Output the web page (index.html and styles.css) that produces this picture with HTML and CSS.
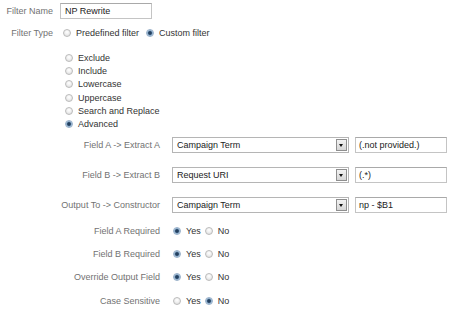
FILE: index.html
```html
<!DOCTYPE html>
<html lang="en">
<head>
  <meta charset="UTF-8" />
  <title>Edit Filter</title>
  <link rel="stylesheet" href="styles.css">
</head>
<body>
  <div class="form">
    <div class="row name-row">
      <span class="label">Filter Name</span>
      <span class="textbox name">NP Rewrite</span>
    </div>
    <div class="row type-row">
      <span class="label">Filter Type</span>
      <span class="choice"><i class="radio"></i>Predefined filter</span>
      <span class="choice"><i class="radio on"></i>Custom filter</span>
    </div>

    <ul class="options">
      <li><i class="radio"></i>Exclude</li>
      <li><i class="radio"></i>Include</li>
      <li><i class="radio"></i>Lowercase</li>
      <li><i class="radio"></i>Uppercase</li>
      <li><i class="radio"></i>Search and Replace</li>
      <li><i class="radio on"></i>Advanced</li>
    </ul>

    <div class="fields">
      <div class="field">
        <span class="label wide">Field A -&gt; Extract A</span>
        <span class="select">Campaign Term<b class="arrow"></b></span>
        <span class="textbox small">(.not provided.)</span>
      </div>
      <div class="field">
        <span class="label wide">Field B -&gt; Extract B</span>
        <span class="select">Request URI<b class="arrow"></b></span>
        <span class="textbox small">(.*)</span>
      </div>
      <div class="field">
        <span class="label wide">Output To -&gt; Constructor</span>
        <span class="select">Campaign Term<b class="arrow"></b></span>
        <span class="textbox small">np - $B1</span>
      </div>
    </div>

    <div class="switches">
      <div class="switch">
        <span class="label wide">Field A Required</span>
        <span class="choice"><i class="radio on"></i>Yes</span>
        <span class="choice"><i class="radio"></i>No</span>
      </div>
      <div class="switch">
        <span class="label wide">Field B Required</span>
        <span class="choice"><i class="radio on"></i>Yes</span>
        <span class="choice"><i class="radio"></i>No</span>
      </div>
      <div class="switch">
        <span class="label wide">Override Output Field</span>
        <span class="choice"><i class="radio on"></i>Yes</span>
        <span class="choice"><i class="radio"></i>No</span>
      </div>
      <div class="switch">
        <span class="label wide">Case Sensitive</span>
        <span class="choice"><i class="radio"></i>Yes</span>
        <span class="choice"><i class="radio on"></i>No</span>
      </div>
    </div>
  </div>
</body>
</html>
```

FILE: styles.css
```css
body {
  margin: 0;
  padding: 0;
  background: #fff;
  font-family: "Liberation Sans", Arial, sans-serif;
  font-size: 9px;
  color: #333;
}
.form {
  padding-top: 3px;
}
.row {
  display: flex;
  align-items: center;
  height: 16px;
}
.label {
  width: 53px;
  text-align: right;
  color: #727272;
  flex: none;
}
.label.wide {
  width: 160px;
}
.name-row .label {
  margin-right: 7px;
}
.type-row {
  margin-top: 6px;
}
.type-row .label {
  margin-right: 10px;
}
.type-row .choice {
  margin-right: 7px;
}
.choice {
  display: flex;
  align-items: center;
  color: #333;
}
.radio {
  display: inline-block;
  box-sizing: border-box;
  width: 8px;
  height: 8px;
  border-radius: 50%;
  border: 1px solid #bcbcbc;
  background: radial-gradient(circle at 50% 35%, #fff 0, #f2f2f2 40%, #d8d8d8 100%);
  margin-right: 5px;
  flex: none;
}
.radio.on {
  border-color: #97b0c9;
  background: radial-gradient(circle, #23405f 0, #23405f 1.4px, #7fa2c4 2.3px, #dbe6f1 3.5px);
}
.textbox {
  box-sizing: border-box;
  height: 16px;
  border: 1px solid #c4c4c4;
  border-top-color: #a9a9a9;
  background: #fff;
  color: #222;
  padding: 0 3px;
  line-height: 14px;
}
.textbox.name {
  width: 92px;
  padding-left: 4px;
}
.options {
  list-style: none;
  margin: 10px 0 0 65px;
  padding: 0;
}
.options li {
  display: flex;
  align-items: center;
  height: 13.3px;
}
.fields {
  margin-top: 6px;
  display: flex;
  flex-direction: column;
  gap: 14px;
}
.field {
  display: flex;
  align-items: center;
  height: 16px;
}
.field .label {
  margin-right: 12px;
}
.select {
  box-sizing: border-box;
  position: relative;
  width: 177px;
  height: 16px;
  border: 1px solid #b5b5b5;
  background: #fff;
  color: #222;
  padding-left: 4px;
  line-height: 14px;
  margin-right: 6px;
}
.arrow {
  position: absolute;
  top: 1px;
  right: 1px;
  box-sizing: border-box;
  width: 11px;
  height: 12px;
  border: 1px solid #8f8f8f;
  background: linear-gradient(#f2f2f2, #d6d6d6);
}
.arrow::after {
  content: "";
  position: absolute;
  left: 2px;
  top: 4px;
  border-left: 2.5px solid transparent;
  border-right: 2.5px solid transparent;
  border-top: 3px solid #111;
}
.textbox.small {
  width: 92px;
}
.switches {
  margin-top: 10px;
  display: flex;
  flex-direction: column;
  gap: 7.3px;
}
.switch {
  display: flex;
  align-items: center;
  height: 16px;
}
.switch .label {
  margin-right: 13px;
}
.switch .choice {
  margin-right: 4px;
}
```
